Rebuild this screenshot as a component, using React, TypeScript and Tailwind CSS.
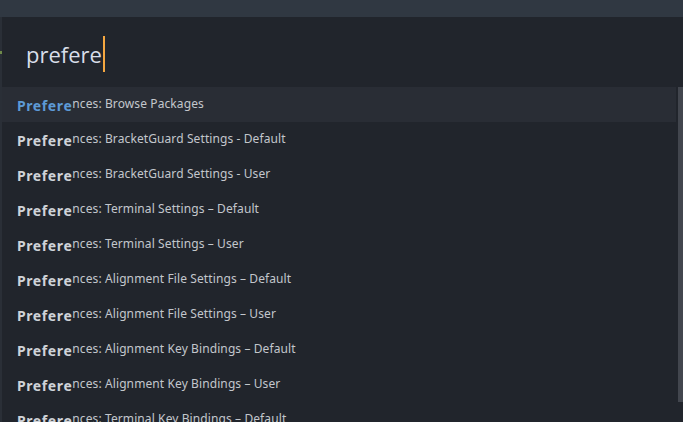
import React from 'react';

const items: string[] = [
  'nces: Browse Packages',
  'nces: BracketGuard Settings - Default',
  'nces: BracketGuard Settings - User',
  'nces: Terminal Settings – Default',
  'nces: Terminal Settings – User',
  'nces: Alignment File Settings – Default',
  'nces: Alignment File Settings – User',
  'nces: Alignment Key Bindings – Default',
  'nces: Alignment Key Bindings – User',
  'nces: Terminal Key Bindings – Default',
];

const App: React.FC = () => {
  return (
    <div className="w-[683px] h-[422px] overflow-hidden flex flex-col bg-[#21252c] font-['Open_Sans',sans-serif]">
      {/* editor tab strip behind the palette */}
      <div className="h-[17px] shrink-0 bg-[#303842]" />

      <div className="flex flex-1 min-h-0">
        <div className="w-[2px] shrink-0 bg-[#2a2f37] flex flex-col">
          <div className="h-[34px]" />
          <div className="h-[3px] bg-[#6f8a4a]" />
        </div>

        <div className="flex-1 flex flex-col min-w-0 bg-[#21252c]">
          <div className="h-[70px] shrink-0 flex items-center pl-[24px] pt-[3px]">
            <span className="text-[22px] leading-[30px] text-[#d8dee9]">prefere</span>
            <span className="w-[2px] h-[36px] bg-[#f5a740] ml-[1px]" />
          </div>

          <div className="flex flex-1 min-h-0">
            <div className="flex-1 flex flex-col mr-[2px] font-['Noto_Sans',sans-serif]">
              {items.map((rest, i) => {
                const selected = i === 0;
                return (
                  <div
                    key={i}
                    className={`h-[35px] shrink-0 pl-[15px] leading-[33px] whitespace-nowrap ${
                      selected ? 'bg-[#292d35]' : ''
                    }`}
                  >
                    <span
                      className={`text-[14px] font-bold tracking-[0.6px] ${
                        selected ? 'text-[#5d9ad6]' : 'text-[#cfd3d8]'
                      }`}
                    >
                      Prefere
                    </span>
                    <span className="text-[12px] tracking-[0.1px] text-[#c3c7cc] align-[3px]">
                      {rest}
                    </span>
                  </div>
                );
              })}
            </div>
            <div className="w-[5px] shrink-0">
              <div className="h-[315px] bg-[#42464e]" />
            </div>
          </div>
        </div>
      </div>
    </div>
  );
};

export default App;
